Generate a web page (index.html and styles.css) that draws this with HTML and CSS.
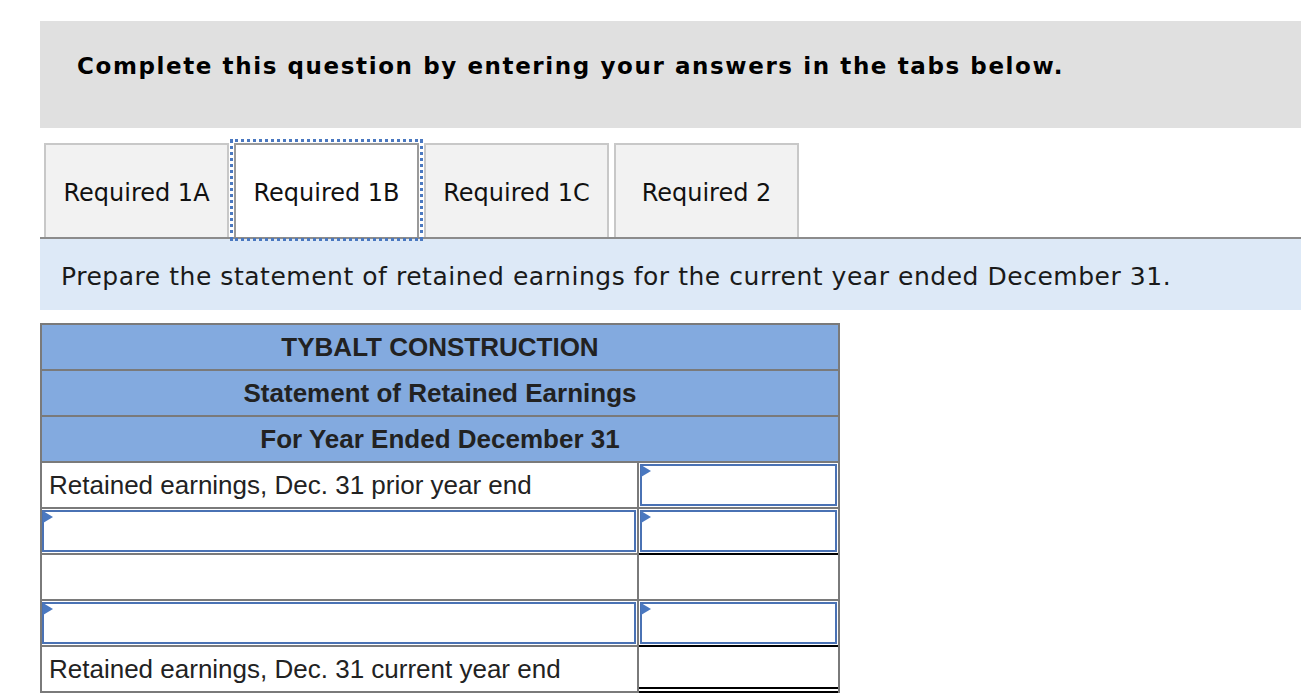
FILE: index.html
```html
<!DOCTYPE html>
<html>
<head>
<meta charset="utf-8">
<link rel="stylesheet" href="styles.css">
</head>
<body>
<div class="page">
  <div class="prompt">Complete this question by entering your answers in the tabs below.</div>
  <div class="tabs">
    <div class="tab">Required 1A</div>
    <div class="tab active">Required 1B</div>
    <div class="tab">Required 1C</div>
    <div class="tab">Required 2</div>
  </div>
  <div class="instr">Prepare the statement of retained earnings for the current year ended December 31.</div>
  <div class="sheet">
    <div class="hd">TYBALT CONSTRUCTION</div>
    <div class="hd">Statement of Retained Earnings</div>
    <div class="hd">For Year Ended December 31</div>
    <div class="row">
      <div class="lab">Retained earnings, Dec. 31 prior year end</div>
      <div class="val"><div class="inp"></div></div>
    </div>
    <div class="row">
      <div class="lab"><div class="inp"></div></div>
      <div class="val under"><div class="inp"></div></div>
    </div>
    <div class="row">
      <div class="lab"></div>
      <div class="val"></div>
    </div>
    <div class="row">
      <div class="lab"><div class="inp"></div></div>
      <div class="val under"><div class="inp"></div></div>
    </div>
    <div class="row">
      <div class="lab">Retained earnings, Dec. 31 current year end</div>
      <div class="val dbl"></div>
    </div>
  </div>
</div>
</body>
</html>
```

FILE: styles.css
```css
html, body {
  margin: 0;
  padding: 0;
  background: #fff;
}

.page {
  padding-left: 40px;
  padding-top: 21px;
  font-family: "DejaVu Sans", Verdana, sans-serif;
  color: #111;
}

.prompt {
  background: #e0e0e0;
  height: 107px;
  box-sizing: border-box;
  padding: 34px 0 0 37px;
  font-weight: bold;
  font-size: 23px;
  line-height: 22px;
  letter-spacing: 1.6px;
  color: #000;
}

.tabs {
  margin-top: 15px;
  padding-left: 4px;
  display: flex;
  gap: 5px;
  border-bottom: 2px solid #8c8c8c;
}

.tab {
  width: 185px;
  height: 94px;
  box-sizing: border-box;
  padding-top: 3px;
  border: 2px solid #c8c8c8;
  border-bottom: none;
  background: #f2f2f2;
  display: flex;
  align-items: center;
  justify-content: center;
  font-size: 24px;
  color: #111;
}

.tab.active {
  background: #fff;
  border-color: #9a9a9a;
  outline: 3px dotted #4a78c0;
  outline-offset: 1px;
}

.instr {
  height: 71px;
  box-sizing: border-box;
  background: #dde9f7;
  padding-left: 21px;
  padding-top: 3px;
  display: flex;
  align-items: center;
  font-size: 25px;
  letter-spacing: 0.53px;
  color: #1a1a1a;
}

.sheet {
  margin-top: 13px;
  width: 800px;
  box-sizing: border-box;
  border: 2px solid #7a7a7a;
  border-bottom: none;
  font-family: "Liberation Sans", Arial, sans-serif;
  color: #222;
}

.hd {
  height: 46px;
  box-sizing: border-box;
  border-bottom: 2px solid #7a7a7a;
  background: #83aadf;
  display: flex;
  align-items: center;
  justify-content: center;
  font-weight: bold;
  font-size: 26px;
}

.row {
  display: grid;
  grid-template-columns: 597px 199px;
  height: 46px;
}

.lab, .val {
  box-sizing: border-box;
  border-bottom: 2px solid #7a7a7a;
  display: flex;
  align-items: stretch;
}

.lab {
  border-right: 2px solid #7a7a7a;
  align-items: center;
  padding-left: 7px;
  font-size: 26px;
}

.lab:has(.inp) {
  padding-left: 0;
  align-items: stretch;
}

.val.under {
  border-bottom-color: #000;
}

.val.dbl {
  border-bottom: 6px double #000;
}

.inp {
  position: relative;
  flex: 1;
  margin: 1px 1px 1px 0;
  border: 2px solid #4a72b4;
  background: #fff;
}

.val .inp {
  margin: 1px;
}

.inp::before {
  content: "";
  position: absolute;
  left: -1px;
  top: -1px;
  width: 0;
  height: 0;
  border-left: 10px solid #4a78c0;
  border-top: 6px solid transparent;
  border-bottom: 6px solid transparent;
}
```
